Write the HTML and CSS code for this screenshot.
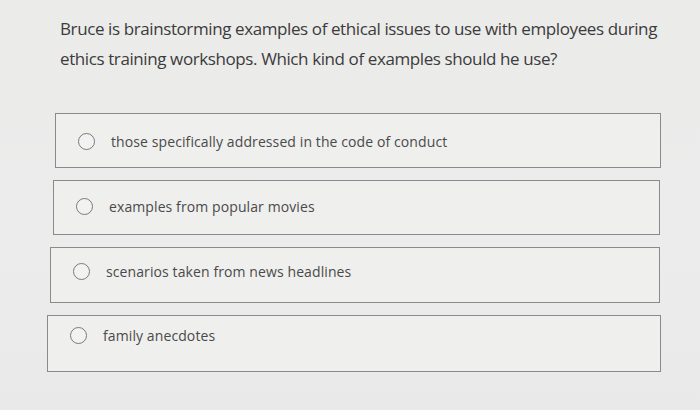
FILE: index.html
```html
<!DOCTYPE html>
<html>
<head>
<meta charset="utf-8">
<link rel="stylesheet" href="styles.css">
</head>
<body>
<div class="page">
  <p class="question">Bruce is brainstorming examples of ethical issues to use with employees during ethics training workshops. Which kind of examples should he use?</p>
  <div class="options">
    <label class="option o1"><span class="radio"></span><span class="text">those specifically addressed in the code of conduct</span></label>
    <label class="option o2"><span class="radio"></span><span class="text">examples from popular movies</span></label>
    <label class="option o3"><span class="radio"></span><span class="text">scenarios taken from news headlines</span></label>
    <label class="option o4"><span class="radio"></span><span class="text">family anecdotes</span></label>
  </div>
</div>
</body>
</html>
```
FILE: styles.css
```css
html, body {
  margin: 0;
  padding: 0;
}
body {
  width: 700px;
  height: 410px;
  background: linear-gradient(180deg, #ebebea 0%, #ececec 60%, #e9e9e9 100%);
  font-family: "Open Sans", "Liberation Sans", sans-serif;
  overflow: hidden;
}
.page {
  padding: 14px 0 0 0;
}
.question {
  margin: 0 0 0 60px;
  width: 615px;
  font-size: 17px;
  line-height: 30px;
  color: #3b3b3b;
  letter-spacing: -0.4px;
}
.options {
  display: flex;
  flex-direction: column;
  gap: 12px;
  margin-top: 39px;
}
.option {
  display: flex;
  align-items: center;
  box-sizing: border-box;
  height: 55px;
  border: 1px solid #8a8a8a;
  background: #efefee;
}
.o1 { margin-left: 55px; margin-right: 39px; padding-top: 1px; }
.o2 { margin-left: 53px; margin-right: 40px; padding-bottom: 2px; }
.o3 { margin-left: 50px; margin-right: 40px; height: 56px; padding-bottom: 8px; }
.o4 { margin-left: 47px; margin-right: 39px; height: 57px; padding-bottom: 16px; }
.radio {
  width: 15px;
  height: 15px;
  border: 1.5px solid #7a7a7a;
  border-radius: 50%;
  margin-left: 22px;
  flex-shrink: 0;
  background: #f2f2f2;
}
.text {
  margin-left: 16px;
  font-size: 14px;
  color: #4a4a4a;
  letter-spacing: 0.1px;
}
```
